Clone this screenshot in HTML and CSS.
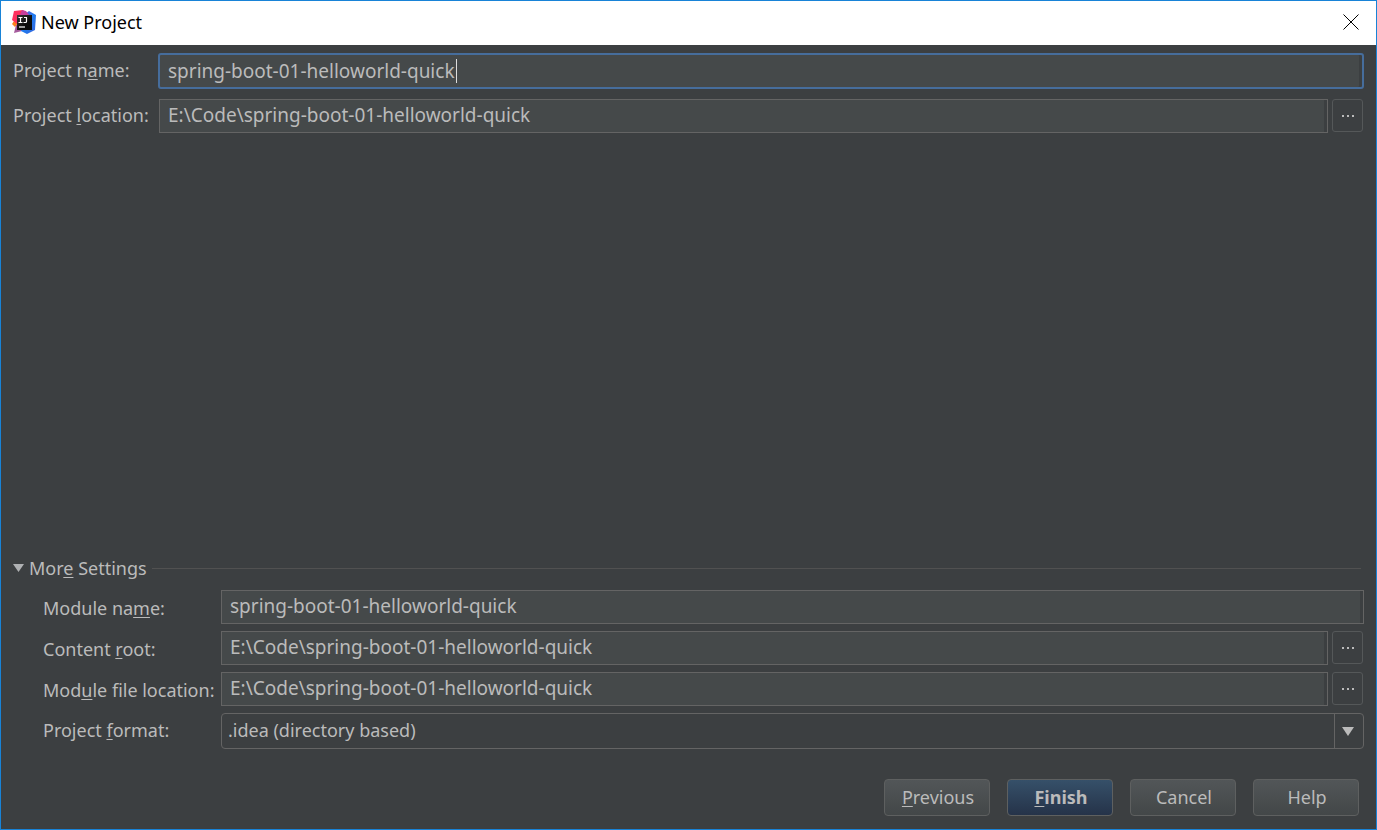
FILE: index.html
```html
<!DOCTYPE html>
<html lang="en">
<head>
<meta charset="utf-8">
<title>New Project</title>
<link rel="stylesheet" href="styles.css">
</head>
<body>
<div class="window">
  <header class="titlebar">
    <svg class="logo" viewBox="0 0 24 24" aria-hidden="true">
      <defs>
        <linearGradient id="cool" x1="0" y1="0" x2="1" y2="1"><stop offset="0" stop-color="#7a4fd0"/><stop offset="0.5" stop-color="#1f7cf0"/><stop offset="1" stop-color="#3a63d8"/></linearGradient>
        <linearGradient id="screen" x1="0" y1="0" x2="1" y2="1"><stop offset="0" stop-color="#3a3436"/><stop offset="0.6" stop-color="#0b0b0b"/></linearGradient>
      </defs>
      <path d="M2 11 L0 14 L3 17 L7 12 Z" fill="#fc801d"/>
      <path d="M4 15 L2 23 L10 21 L12 15 Z" fill="#a45a9c"/>
      <path d="M13 4 L17 1 L24 5 L23 20 L15 24 L9 21 Z" fill="url(#cool)"/>
      <path d="M2 1 L11 0 L15 4 L12 9 L5 14 L0 10 Z" fill="#fe315d"/>
      <path d="M10 0 L14 1 L17 5 H8 Z" fill="#c73f9c"/>
      <rect x="5" y="5" width="15" height="15" fill="url(#screen)"/>
      <path d="M6.500 7.500H10.500M8.500 7.500V12.500M6.500 12.500H10.500M12 7.500H15M14.500 7.500V11.500Q14.500 12.500 13.500 12.500H11.500" stroke="#fff" stroke-width="1.200" fill="none"/>
      <path d="M7 17H13" stroke="#fff" stroke-width="1.200"/>
    </svg>
    <h1 class="title">New Project</h1>
    <button class="close" type="button" aria-label="Close">
      <svg viewBox="0 0 16 16" width="16" height="16" aria-hidden="true"><path d="M0.500 0.500L15.500 15.500M15.500 0.500L0.500 15.500" stroke="#000" stroke-width="1"/></svg>
    </button>
  </header>
  <form class="content">
    <div class="project">
      <label for="name">Project n<u>a</u>me:</label>
      <div class="line focused">
        <input class="field" id="name" type="text" value="spring-boot-01-helloworld-quick" spellcheck="false">
        <span class="caret"></span>
      </div>
      <label for="location">Project <u>l</u>ocation:</label>
      <div class="line browsable">
        <input class="field" id="location" type="text" value="E:\Code\spring-boot-01-helloworld-quick" spellcheck="false">
        <button class="browse" type="button" aria-label="Browse project location"><i></i><i></i><i></i></button>
      </div>
    </div>

    <section class="more">
      <button class="toggle" type="button" aria-expanded="true">
        <svg viewBox="0 0 11 8" width="11" height="8" aria-hidden="true"><path d="M0 0H11L5.500 8Z" fill="#afb1b3"/></svg>
        <span>Mor<u>e</u> Settings</span>
      </button>
      <div class="settings">
        <label for="module">Module na<u>m</u>e:</label>
        <div class="line"><input class="field" id="module" type="text" value="spring-boot-01-helloworld-quick" spellcheck="false"></div>
        <label for="root">Content <u>r</u>oot:</label>
        <div class="line browsable">
          <input class="field" id="root" type="text" value="E:\Code\spring-boot-01-helloworld-quick" spellcheck="false">
          <button class="browse" type="button" aria-label="Browse content root"><i></i><i></i><i></i></button>
        </div>
        <label for="file">Mod<u>u</u>le file location:</label>
        <div class="line browsable">
          <input class="field" id="file" type="text" value="E:\Code\spring-boot-01-helloworld-quick" spellcheck="false">
          <button class="browse" type="button" aria-label="Browse module file location"><i></i><i></i><i></i></button>
        </div>
        <label class="format" for="format">Project <u>f</u>ormat:</label>
        <div class="combo">
          <select id="format"><option>.idea (directory based)</option></select>
          <span class="arrow"><svg viewBox="0 0 12 9" width="12" height="9" aria-hidden="true"><path d="M0 0H12L6 9Z" fill="#bbb"/></svg></span>
        </div>
      </div>
    </section>

    <footer class="actions">
      <button class="action" type="button"><span><u>P</u>revious</span></button>
      <button class="action primary" type="submit"><span><u>F</u>inish</span></button>
      <button class="action" type="button">Cancel</button>
      <button class="action" type="button">Help</button>
    </footer>
  </form>
</div>
</body>
</html>
```
FILE: styles.css
```css
* { box-sizing: border-box; }

body {
  margin: 0;
  background: #3c3f41;
  color: #bbb;
  font: 18px/24px "Noto Sans", "Open Sans", sans-serif;
}

button, input, select { font: inherit; color: inherit; margin: 0; }

u { text-decoration-thickness: 1px; text-underline-offset: 2px; }

.window {
  display: flex;
  flex-direction: column;
  min-height: 100vh;
  border: 1px solid #1883d7;
}

.titlebar {
  display: flex;
  align-items: center;
  height: 44px;
  padding: 0 17px 2px 11px;
  gap: 5px;
  background: #fff;
  color: #000;
}

.logo { width: 24px; height: 24px; }

.title { margin: 0; font-size: 18px; font-weight: 400; }

.close {
  display: flex;
  margin-left: auto;
  padding: 0;
  border: 0;
  background: none;
}

.content {
  flex: 1;
  display: flex;
  flex-direction: column;
  padding: 8px 12px 13px;
}

.project, .settings {
  display: grid;
  align-items: center;
}

.project { grid-template-columns: 146px 1fr; row-gap: 10px; }
.project label { padding-bottom: 2px; }

.line { position: relative; display: flex; gap: 4px; }

.browsable { padding-right: 1px; }

.field {
  flex: 1;
  min-width: 0;
  height: 34px;
  padding: 0 8px 2px;
  border: 1px solid #646464;
  border-radius: 0;
  outline: 0;
  background: #45494a;
  box-shadow: inset -3px 0 #3c3f41;
  font-size: 19px;
}

.focused { height: 36px; margin-left: -1px; }

.focused .field {
  height: 36px;
  padding: 0 8px;
  border: 2px solid #466d9c;
  border-radius: 3px;
}

.caret {
  position: absolute;
  left: 298px;
  top: 6px;
  width: 1px;
  height: 24px;
  background: #ddd;
}

.browse {
  display: flex;
  align-items: center;
  justify-content: center;
  gap: 3px;
  width: 31px;
  height: 33px;
  padding: 0;
  border: 1px solid #555859;
  border-radius: 3px;
  background: none;
}

.browse i { width: 2px; height: 2px; background: #bbb; }

.more { margin-top: auto; }

.toggle {
  display: flex;
  align-items: center;
  gap: 5px;
  width: 100%;
  padding: 0 3px 0 0;
  border: 0;
  background: none;
}

.toggle::after {
  content: "";
  flex: 1;
  height: 1px;
  background: #515151;
}

.settings {
  grid-template-columns: 178px 1fr;
  row-gap: 7px;
  margin-top: 10px;
  padding-left: 30px;
}

.settings label { padding-top: 2px; white-space: nowrap; }
.settings .format { padding: 0 0 2px; }

.combo { position: relative; display: flex; }

.combo select {
  flex: 1;
  height: 36px;
  padding: 0 36px 2px 6px;
  border: 1px solid #646464;
  border-radius: 4px;
  outline: 0;
  background: #3c3f41;
  appearance: none;
}

.arrow {
  position: absolute;
  top: 1px;
  right: 1px;
  bottom: 1px;
  display: flex;
  align-items: center;
  justify-content: center;
  width: 29px;
  padding-right: 2px;
  border-left: 1px solid #646464;
  pointer-events: none;
}

.actions {
  display: flex;
  justify-content: flex-end;
  gap: 17px;
  margin-top: 30px;
  padding-right: 5px;
}

.action {
  width: 106px;
  height: 37px;
  padding: 0 0 2px 2px;
  border: 1px solid #5e6060;
  border-radius: 4px;
  background: linear-gradient(#525658, #434748);
}

.primary {
  background: linear-gradient(#365069, #253349);
  font-weight: 700;
}
```
